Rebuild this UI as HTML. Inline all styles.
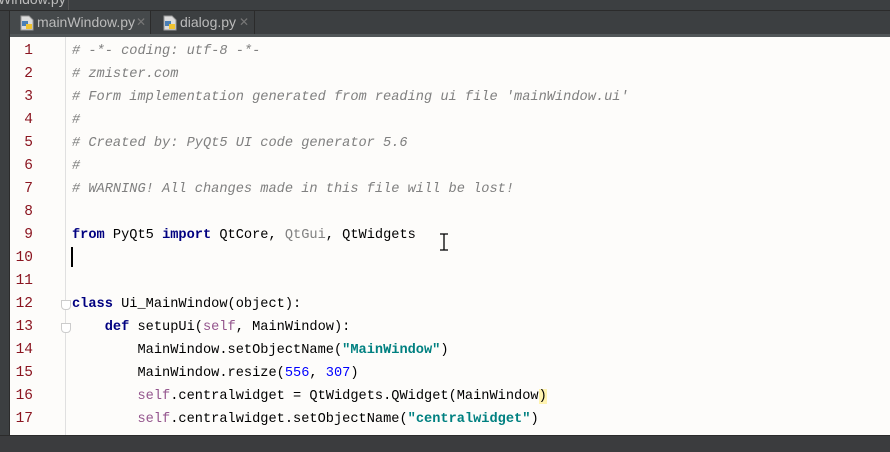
<!DOCTYPE html>
<html><head><meta charset="utf-8"><style>
body{margin:0;width:890px;height:451px;overflow:hidden;background:#3c3f41;position:relative;font-family:"Liberation Mono",monospace}
.top{position:absolute;left:0;top:0;width:890px;height:10px;background:#3c3f41;border-bottom:1px solid #2b2b2b}
.top span{position:absolute;left:-2px;top:-9px;color:#bbb;font:14px "Liberation Sans",sans-serif}
.top i{position:absolute;left:68px;top:0;width:1px;height:10px;background:#555}
.left{position:absolute;left:0;top:11px;width:9px;height:425px;background:#3c3f41;border-right:1px solid #2b2b2b}
.tabs{position:absolute;left:10px;top:11px;width:880px;height:23px;background:#3c3f41;border-bottom:3px solid #515658}
.tab{position:absolute;top:0;height:23px;color:#bbbbbb;font:14px "Liberation Sans",sans-serif;line-height:23px}
.t1{left:0;width:140px;background:#45494b;border-right:1px solid #2b2b2b}
.t2{left:141px;width:103px;border-right:1px solid #2b2b2b}
.tab svg{position:absolute;top:4px}
.tab .n{position:absolute}
.tab .x{position:absolute;color:#777;font-size:12px}
.ed{position:absolute;left:10px;top:37px;width:880px;height:398px;background:#fdfcfa;overflow:hidden}
.gl{position:absolute;left:55px;top:0;width:1px;height:398px;background:#e0e0e0}
.ln{position:absolute;left:0;width:23px;text-align:right;color:#8b1520;font-size:14.5px;height:23px;line-height:23px}
.c{position:absolute;left:62px;height:23px;line-height:23px;font-size:13.65px;color:#000;white-space:pre;font-family:"Liberation Mono","DejaVu Sans Mono",monospace}
.cm{color:#808080;font-style:italic}
.k{color:#000080;font-weight:bold}
.g{color:#808080}
.s{color:#008080;font-weight:bold}
.num{color:#0000ff}
.sf{color:#94558d}
.bot{position:absolute;left:0;top:435px;width:890px;height:16px;background:#3b3c3e;border-top:1px solid #2b2b2b}
.fold{position:absolute;left:51px;width:8px;height:8px;border:1px solid #ccc;border-radius:0 0 4px 4px;background:#fff}
</style></head><body>
<div class="top"><span>Window.py</span><i></i></div>
<div class="left"></div>
<div class="tabs">
<div class="tab t1"><svg style="left:10px" width="14" height="16" viewBox="0 0 14 16"><path d="M1 1h8l4 4v10H1z" fill="#ddd" stroke="#999"/><rect x="2" y="6" width="6" height="5" fill="#4a7fb5"/><rect x="6" y="9" width="6" height="5" fill="#f0c330"/></svg><span class="n" style="left:27px">mainWindow.py</span><span class="x" style="left:126px">✕</span></div>
<div class="tab t2"><svg style="left:12px" width="14" height="16" viewBox="0 0 14 16"><path d="M1 1h8l4 4v10H1z" fill="#ddd" stroke="#999"/><rect x="2" y="6" width="6" height="5" fill="#4a7fb5"/><rect x="6" y="9" width="6" height="5" fill="#f0c330"/></svg><span class="n" style="left:29px">dialog.py</span><span class="x" style="left:88px">✕</span></div>
</div>
<div class="ed">
<div class="gl"></div>
<div class="ln" style="top:3px">1</div><div class="c cm" style="top:3px"># -*- coding: utf-8 -*-</div>
<div class="ln" style="top:26px">2</div><div class="c cm" style="top:26px"># zmister.com</div>
<div class="ln" style="top:49px">3</div><div class="c cm" style="top:49px"># Form implementation generated from reading ui file 'mainWindow.ui'</div>
<div class="ln" style="top:72px">4</div><div class="c cm" style="top:72px">#</div>
<div class="ln" style="top:95px">5</div><div class="c cm" style="top:95px"># Created by: PyQt5 UI code generator 5.6</div>
<div class="ln" style="top:118px">6</div><div class="c cm" style="top:118px">#</div>
<div class="ln" style="top:141px">7</div><div class="c cm" style="top:141px"># WARNING! All changes made in this file will be lost!</div>
<div class="ln" style="top:164px">8</div>
<div class="ln" style="top:187px">9</div><div class="c" style="top:187px"><span class="k">from</span> PyQt5 <span class="k">import</span> QtCore, <span class="g">QtGui</span>, QtWidgets</div>
<div class="ln" style="top:210px">10</div><div style="position:absolute;left:61px;top:210px;width:2px;height:20px;background:#000"></div>
<div class="ln" style="top:233px">11</div>
<div class="ln" style="top:256px">12</div><div class="fold" style="top:263px"></div><div class="c" style="top:256px"><span class="k">class</span> Ui_MainWindow(object):</div>
<div class="ln" style="top:279px">13</div><div class="fold" style="top:286px"></div><div class="c" style="top:279px">    <span class="k">def</span> setupUi(<span class="sf">self</span>, MainWindow):</div>
<div class="ln" style="top:302px">14</div><div class="c" style="top:302px">        MainWindow.setObjectName(<span class="s">"MainWindow"</span>)</div>
<div class="ln" style="top:325px">15</div><div class="c" style="top:325px">        MainWindow.resize(<span class="num">556</span>, <span class="num">307</span>)</div>
<div class="ln" style="top:348px">16</div><div class="c" style="top:348px">        <span class="sf">self</span>.centralwidget = QtWidgets.QWidget(MainWindow<span style="background:#fff3b0">)</span></div>
<div class="ln" style="top:371px">17</div><div class="c" style="top:371px">        <span class="sf">self</span>.centralwidget.setObjectName(<span class="s">"centralwidget"</span>)</div>
<svg style="position:absolute;left:428px;top:196px" width="12" height="18"><path d="M2 1h8M6 1v16M2 17h8" stroke="#000" stroke-width="1.3" fill="none"/></svg>
</div>
<div class="bot"></div>
</body></html>
